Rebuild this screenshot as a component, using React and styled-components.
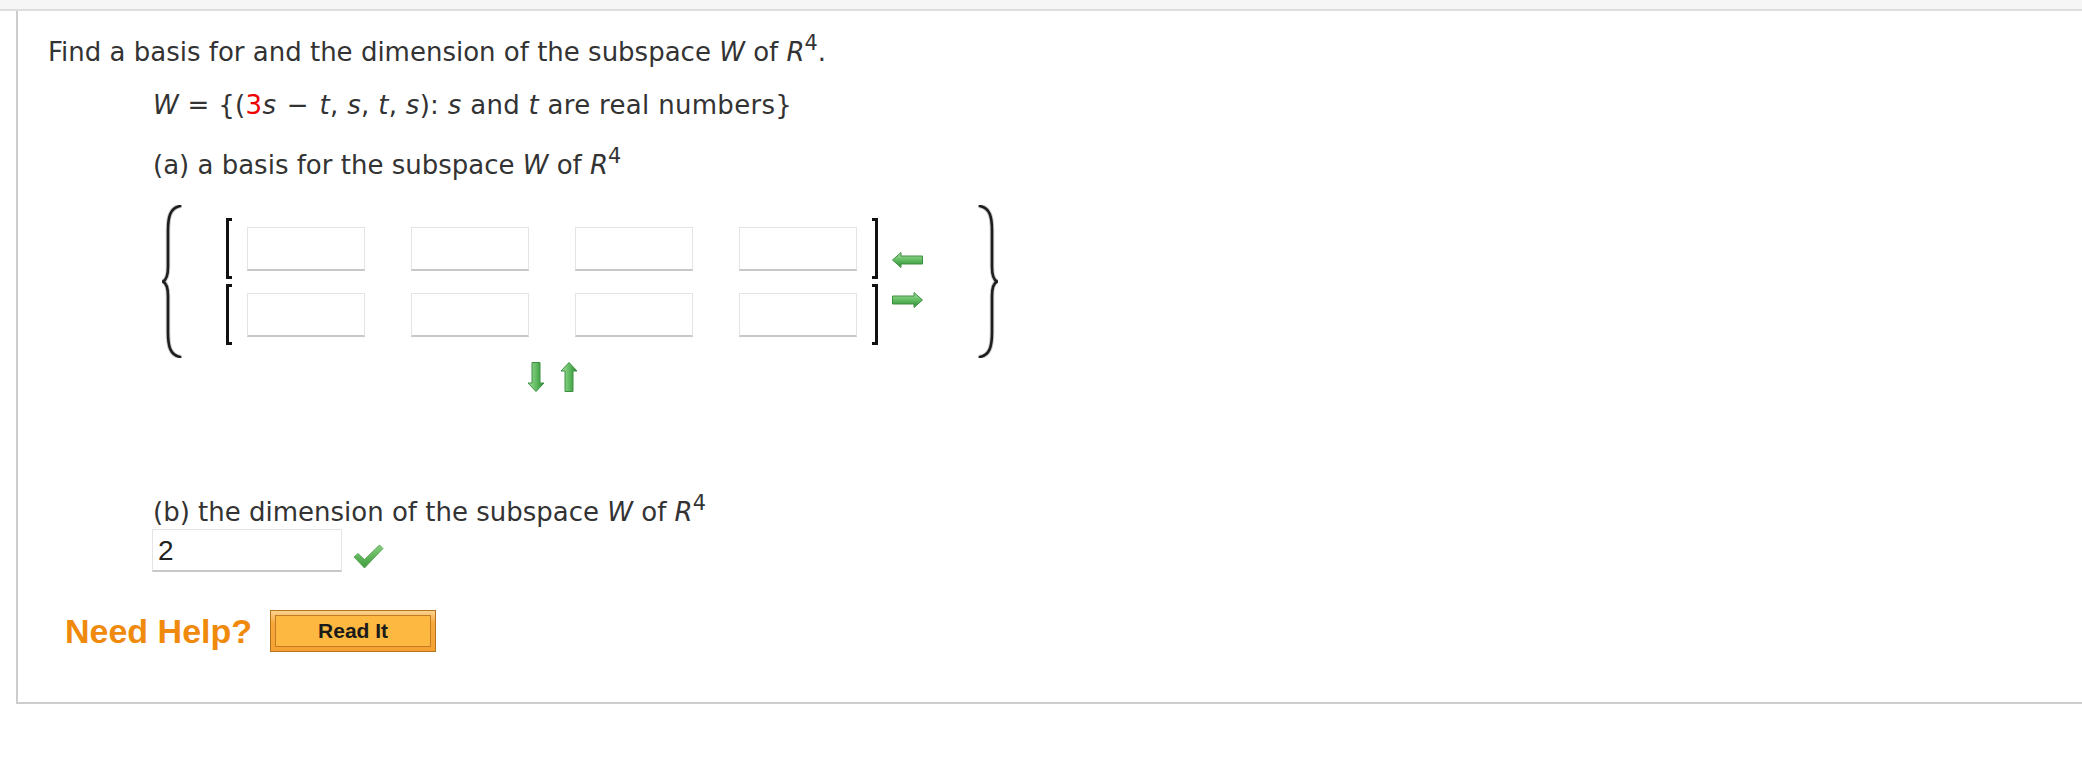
import React from "react";
import styled, { createGlobalStyle } from "styled-components";

const GlobalStyle = createGlobalStyle`
  html, body {
    margin: 0;
    padding: 0;
    background: #ffffff;
  }
  body {
    font-family: "DejaVu Sans", Verdana, sans-serif;
    color: #333333;
  }
`;

const TopBar = styled.div`
  height: 9px;
  background: #f6f6f6;
  border-bottom: 2px solid #dedede;
`;

const QuestionBox = styled.div`
  box-sizing: border-box;
  height: 693px;
  margin-left: 16px;
  border-left: 2px solid #cdcdcd;
  border-bottom: 2px solid #cdcdcd;
  padding: 25px 0 0 30px;
`;

const Line = styled.div`
  font-size: 26px;
  line-height: 32px;
  white-space: nowrap;
  margin-top: ${(p) => p.$top || 0}px;
  letter-spacing: ${(p) => p.$spread || 0}px;
`;

const Var = styled.i`
  font-style: italic;
`;

const Red = styled.span`
  color: #ee0000;
`;

const Op = styled.span`
  margin: 0 2px;
`;

const Sup = styled.sup`
  font-size: 0.8em;
  line-height: 0;
  vertical-align: 0.55em;
`;

const Indent = styled.div`
  margin-left: 105px;
`;

const MatrixArea = styled.div`
  display: flex;
  align-items: center;
  margin-top: 24px;
`;

const BraceSvg = styled.svg`
  display: block;
  flex: none;
  margin-left: ${(p) => p.$left}px;
`;

const Rows = styled.div`
  display: flex;
  flex-direction: column;
  gap: 5px;
  margin-left: 44px;
`;

const VectorRow = styled.div`
  display: flex;
  align-items: center;
  height: 61px;
`;

const Bracket = styled.div`
  box-sizing: border-box;
  width: 6px;
  height: 61px;
  border: 3px solid #111111;
  ${(p) => (p.$right ? "border-left: none;" : "border-right: none;")}
`;

const Cells = styled.div`
  display: flex;
  gap: 46px;
  margin: 0 15px;
`;

const Cell = styled.input`
  box-sizing: border-box;
  width: 118px;
  height: 44px;
  margin: 0;
  border: 1px solid #e4e4e4;
  border-bottom: 2px solid #c8c8c8;
  background: #ffffff;
  outline: none;
`;

const SideArrows = styled.div`
  display: flex;
  flex-direction: column;
  gap: 24px;
  margin-left: 14px;
  margin-top: -3px;
`;

const ReorderRow = styled.div`
  display: flex;
  align-items: flex-start;
  gap: 15px;
  margin: 4px 0 0 374px;
  height: 29px;
`;

const AnswerRow = styled.div`
  display: flex;
  align-items: center;
  margin-top: 1px;
`;

const AnswerInput = styled.input`
  box-sizing: border-box;
  width: 190px;
  height: 43px;
  margin: 0 0 0 -1px;
  padding: 2px 0 0 5px;
  border: 1px solid #e4e4e4;
  border-bottom: 2px solid #c8c8c8;
  font-family: "Liberation Sans", Arial, sans-serif;
  font-size: 28px;
  color: #222222;
  outline: none;
`;

const CheckSvg = styled.svg`
  display: block;
  margin: 12px 0 0 11px;
`;

const HelpRow = styled.div`
  display: flex;
  align-items: center;
  gap: 18px;
  margin: 38px 0 0 17px;
`;

const HelpLabel = styled.span`
  font-family: "Liberation Sans", Arial, sans-serif;
  font-weight: bold;
  font-size: 34px;
  color: #f08a0c;
`;

const ReadButton = styled.button`
  box-sizing: border-box;
  width: 166px;
  height: 42px;
  padding: 4px;
  margin: 0;
  border: 1px solid #b3731f;
  background: linear-gradient(#fbd38e 0%, #f7a83c 30%, #f5a132 100%);
  cursor: pointer;
`;

const ReadInner = styled.span`
  box-sizing: border-box;
  display: flex;
  align-items: center;
  justify-content: center;
  height: 100%;
  border: 1px solid #c27c25;
  background: #fcb840;
  font-family: "Liberation Sans", Arial, sans-serif;
  font-weight: bold;
  font-size: 21px;
  color: #1a1a1a;
`;

const BRACE_LEFT =
  "M18 1 C8 3 6 12 6 26 L6 62 C6 71 4 75 1 76.5 C4 78 6 82 6 91 L6 127 C6 141 8 150 18 152";
const BRACE_RIGHT =
  "M2 1 C12 3 14 12 14 26 L14 62 C14 71 16 75 19 76.5 C16 78 14 82 14 91 L14 127 C14 141 12 150 2 152";

const Brace = ({ flip, left }) => (
  <BraceSvg width="20" height="153" viewBox="0 0 20 153" $left={left}>
    <path
      d={flip ? BRACE_RIGHT : BRACE_LEFT}
      fill="none"
      stroke="#c8c8c8"
      strokeWidth="4.5"
      strokeLinecap="round"
    />
    <path
      d={flip ? BRACE_RIGHT : BRACE_LEFT}
      fill="none"
      stroke="#1e1e1e"
      strokeWidth="2.6"
      strokeLinecap="round"
    />
  </BraceSvg>
);

const GreenDefs = ({ id, vertical }) => (
  <defs>
    <linearGradient
      id={id}
      x1="0"
      y1="0"
      x2={vertical ? "1" : "0"}
      y2={vertical ? "0" : "1"}
    >
      <stop offset="0" stopColor="#a8e0a4" />
      <stop offset="0.55" stopColor="#5cb85c" />
      <stop offset="1" stopColor="#2e8a36" />
    </linearGradient>
  </defs>
);

const HArrow = ({ dir }) => (
  <svg width="31" height="16" viewBox="0 0 31 16">
    <GreenDefs id={`h-${dir}`} />
    <path
      d={
        dir === "left"
          ? "M0.5 8 L9 0.5 L9 4 L30.5 4 L30.5 12 L9 12 L9 15.5 Z"
          : "M30.5 8 L22 0.5 L22 4 L0.5 4 L0.5 12 L22 12 L22 15.5 Z"
      }
      fill={`url(#h-${dir})`}
      stroke="#3f8f42"
      strokeWidth="1"
      strokeLinejoin="round"
    />
  </svg>
);

const VArrow = ({ dir }) => (
  <svg width="18" height="30" viewBox="0 0 18 30">
    <GreenDefs id={`v-${dir}`} vertical />
    <path
      d={
        dir === "down"
          ? "M9 29.5 L1 21 L5 21 L5 0.5 L13 0.5 L13 21 L17 21 Z"
          : "M9 0.5 L1 9 L5 9 L5 29.5 L13 29.5 L13 9 L17 9 Z"
      }
      fill={`url(#v-${dir})`}
      stroke="#3f8f42"
      strokeWidth="1"
      strokeLinejoin="round"
    />
  </svg>
);

const Check = () => (
  <CheckSvg width="31" height="25" viewBox="0 0 31 25">
    <defs>
      <linearGradient id="chk" x1="0" y1="0" x2="0" y2="1">
        <stop offset="0" stopColor="#86cf7e" />
        <stop offset="1" stopColor="#3e9c3c" />
      </linearGradient>
    </defs>
    <path
      d="M1 13 L5 9.5 L11.5 15.5 L26.5 1 L30 4.5 L11.5 24 Z"
      fill="url(#chk)"
      stroke="#4a9e45"
      strokeWidth="0.8"
      strokeLinejoin="round"
    />
  </CheckSvg>
);

const VectorInputs = () => (
  <VectorRow>
    <Bracket />
    <Cells>
      <Cell type="text" />
      <Cell type="text" />
      <Cell type="text" />
      <Cell type="text" />
    </Cells>
    <Bracket $right />
  </VectorRow>
);

const App = () => {
  return (
    <>
      <GlobalStyle />
      <TopBar />
      <QuestionBox>
        <Line>
          Find a basis for and the dimension of the subspace <Var>W</Var> of{" "}
          <Var>R</Var>
          <Sup>4</Sup>.
        </Line>
        <Indent>
          <Line $top={21} $spread={0.3}>
            <Var>W</Var> = {"{"}(<Red>3</Red>
            <Var>s</Var> <Op>−</Op> <Var>t</Var>, <Var>s</Var>,{" "}
            <Var>t</Var>, <Var>s</Var>): <Var>s</Var> and <Var>t</Var> are
            real numbers{"}"}
          </Line>
          <Line $top={28}>
            (a) a basis for the subspace <Var>W</Var> of <Var>R</Var>
            <Sup>4</Sup>
          </Line>
          <MatrixArea>
            <Brace left={9} />
            <Rows>
              <VectorInputs />
              <VectorInputs />
            </Rows>
            <SideArrows>
              <HArrow dir="left" />
              <HArrow dir="right" />
            </SideArrows>
            <Brace flip left={55} />
          </MatrixArea>
          <ReorderRow>
            <VArrow dir="down" />
            <VArrow dir="up" />
          </ReorderRow>
          <Line $top={105}>
            (b) the dimension of the subspace <Var>W</Var> of <Var>R</Var>
            <Sup>4</Sup>
          </Line>
          <AnswerRow>
            <AnswerInput type="text" defaultValue="2" />
            <Check />
          </AnswerRow>
        </Indent>
        <HelpRow>
          <HelpLabel>Need Help?</HelpLabel>
          <ReadButton type="button">
            <ReadInner>Read It</ReadInner>
          </ReadButton>
        </HelpRow>
      </QuestionBox>
    </>
  );
};

export default App;
